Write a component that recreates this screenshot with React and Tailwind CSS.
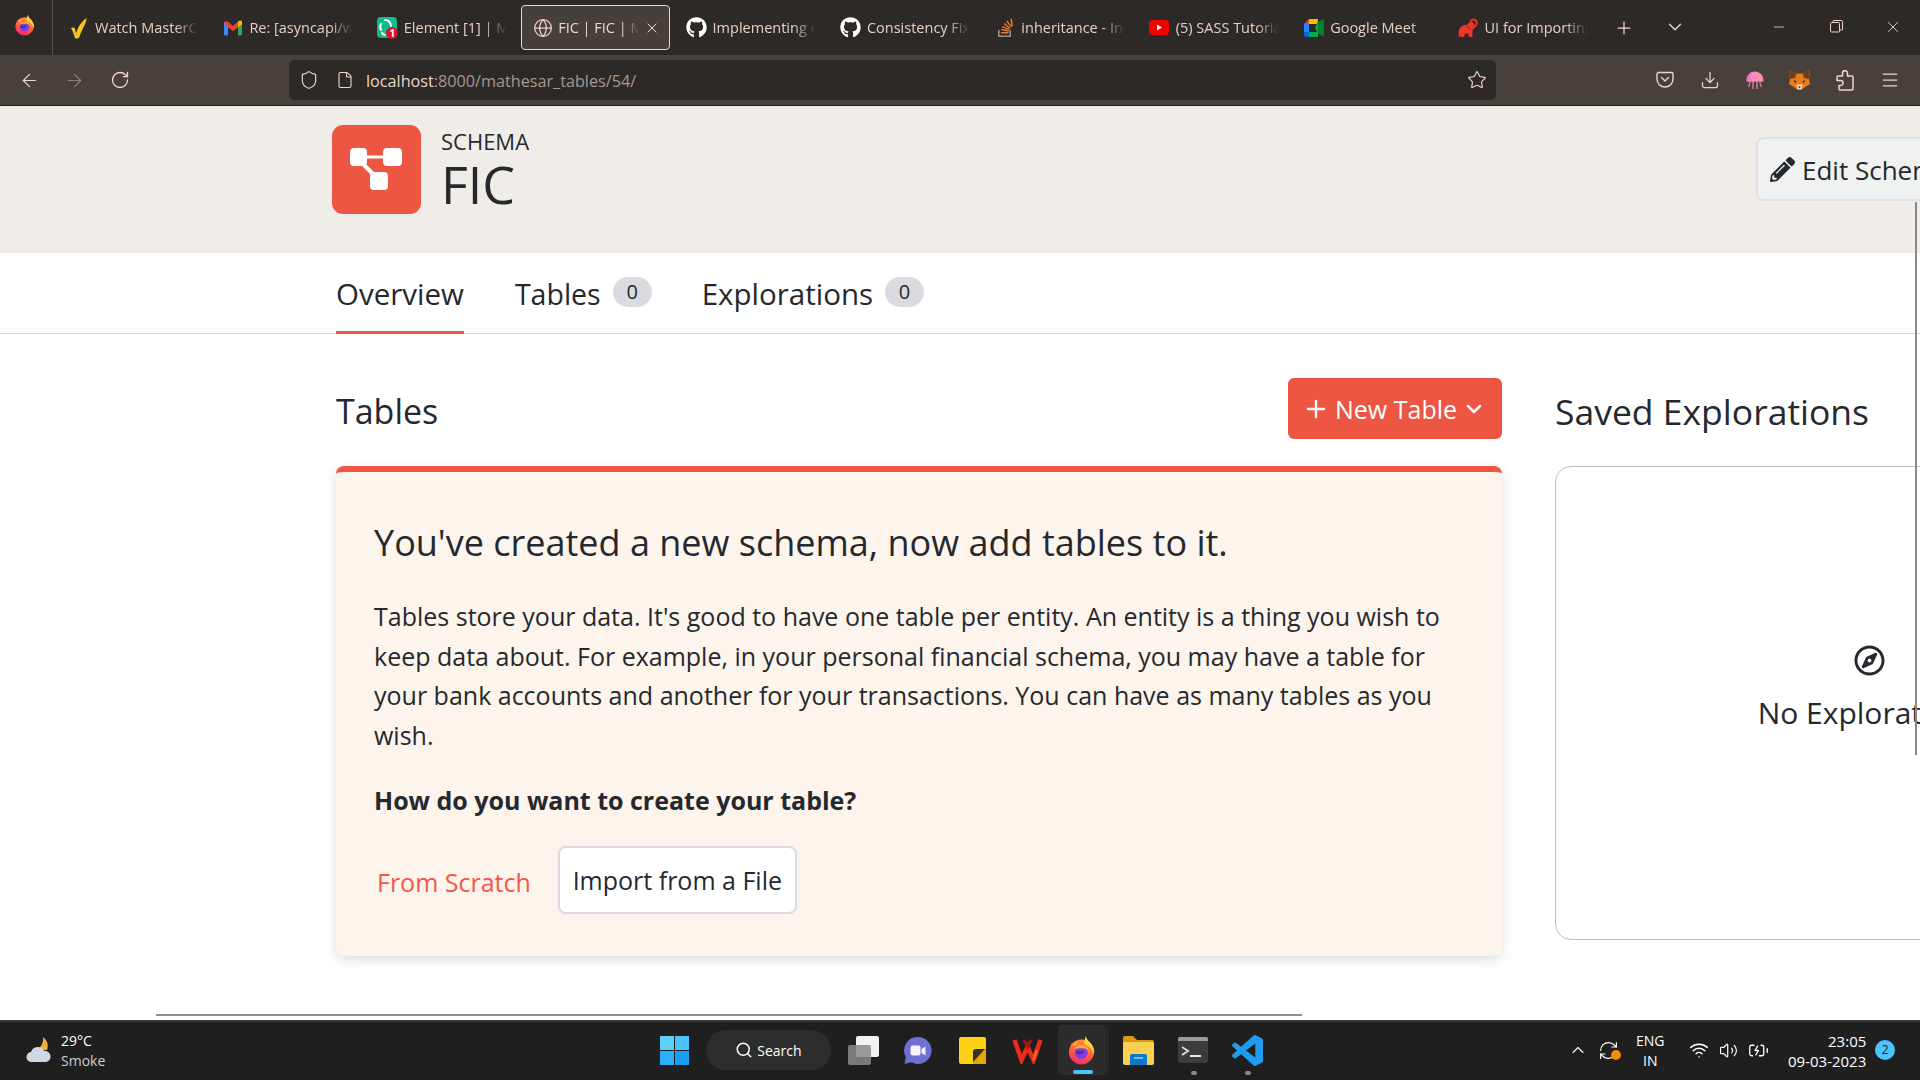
import React from "react";
import {
  ArrowLeft,
  ArrowRight,
  RotateCw,
  Shield,
  File,
  Star,
  Download,
  Menu,
  Globe,
  X,
  Plus,
  ChevronDown,
  ChevronUp,
  Minus,
  Search,
  Wifi,
  Volume2,
  BatteryCharging,
  RefreshCw,
} from "lucide-react";
import { FaGithub, FaPencilAlt, FaRegCompass } from "react-icons/fa";

function FirefoxIcon({ size }) {
  return (
    <svg width={size} height={size} viewBox="0 0 24 24">
      <defs>
        <linearGradient id="ffg" x1="0.7" y1="0" x2="0.3" y2="1">
          <stop offset="0" stopColor="#ff9a2f" />
          <stop offset="0.55" stopColor="#ff5f3f" />
          <stop offset="1" stopColor="#f0256e" />
        </linearGradient>
      </defs>
      <circle cx="11.500" cy="13.500" r="10" fill="url(#ffg)" />
      <path d="M15 0.500c.5 3 3 4.500 5 7.500 1.500 2.300 2.200 5 1.500 8-.8-4-3.500-7-7-8.500C13 6.500 14.500 3 15 0.500z" fill="#ffcf3a" />
      <path d="M3 6c.5 1 1 1.500 2 2 1-1.500 2.500-2.500 4-3-1 1-1.500 2-1.500 3C5 9 3.500 8 3 6z" fill="#ffb52f" />
      <circle cx="11.500" cy="14" r="5.200" fill="#7b3fe0" />
      <path d="M7 12c2 1.500 5 1.500 7 0-.5 2.500-2.500 4-5 3.500-1.200-.3-2-1.500-2-3.500z" fill="#4a2bb0" />
      <path d="M5.500 11.500c2-3 6-4.500 9.500-2.500 1.800 1 3 3 2.800 5-1-2.300-3-3.500-6-3.500-2.500 0-4.500.3-6.300 1z" fill="#ffa63a" />
    </svg>
  );
}

function CheckIcon() {
  return (
    <svg width="18" height="22" viewBox="0 0 18 22">
      <path d="M1 11c1.500-.8 3-.8 4 .5.400 2 .6 3.500 1 5C8 10 11 5 16.500 1c.6 4-5 12-7.500 20-1.500.6-3 .6-4 .2C4 17.500 2.500 14 1 11z" fill="#f7c326" />
    </svg>
  );
}

function GmailIcon() {
  return (
    <svg width="18" height="16" viewBox="0 0 18 16">
      <path d="M0 1.500 4 1.500 9 6l5-4.500h4v3L9 11 0 4.500z" fill="#ea4335" />
      <path d="M0 3v11.500a1 1 0 0 0 1 1h3V6z" fill="#4285f4" />
      <path d="M14 6v9.500h3a1 1 0 0 0 1-1V3z" fill="#34a853" />
      <path d="M14 1.500l2-1c1 0 2 .5 2 1.500v2.500L14 7z" fill="#fbbc05" />
    </svg>
  );
}

function ElementIcon() {
  return (
    <div className="relative w-[20px] h-[21px] rounded-[4px] bg-[#0dbd8b] shrink-0">
      <svg width="20" height="21" viewBox="0 0 20 21" fill="none" stroke="#fff" strokeWidth="2" strokeLinecap="round">
        <path d="M8 3a6 6 0 0 1 6 6" />
        <path d="M4 13a6 6 0 0 1 0-6" />
        <path d="M8 18a6 6 0 0 1-3-2" />
      </svg>
      <div className="absolute right-[-1px] bottom-[-1px] w-[12px] h-[12px] rounded-full bg-[#e0102a] text-white text-[10px] font-bold leading-[12px] text-center">
        1
      </div>
    </div>
  );
}

function StackIcon() {
  return (
    <svg width="16" height="20" viewBox="0 0 16 20">
      <path d="M1 12v7h13v-7h-1.600v5.400H2.600V12z" fill="#9a9086" />
      <path d="M4 15.500h7.500V14H4zM4.200 12.300l7.300 1.500.3-1.500-7.300-1.500zM5 9.200l6.800 3.100.6-1.300-6.800-3.100zM6.900 6.200l5.700 4.800.9-1.100-5.700-4.800zM10.500 2.500l-1.200.9 4.400 5.900 1.200-.9zM14.800 0.800l-1.500.3 1.300 7.300 1.400-.3z" fill="#e8792b" />
    </svg>
  );
}

function YoutubeIcon() {
  return (
    <svg width="20" height="15" viewBox="0 0 20 15">
      <rect width="20" height="15" rx="4" fill="#f40000" />
      <path d="M8 4.500v6l5-3z" fill="#fff" />
    </svg>
  );
}

function MeetIcon() {
  return (
    <svg width="20" height="18" viewBox="0 0 20 18">
      <path d="M5 0h9v5H5z" fill="#fbbc04" />
      <path d="M5 0v5H0z" fill="#ea4335" />
      <path d="M0 5h5v8H0z" fill="#2684fc" />
      <path d="M0 13h5v5H2a2 2 0 0 1-2-2z" fill="#0066da" />
      <path d="M5 13h9v5H5z" fill="#00ac47" />
      <path d="M14 3 20 0v18l-6-4z" fill="#00832d" />
      <path d="M14 1.500V14L11 9z" fill="#00ac47" />
    </svg>
  );
}

function ElephantIcon() {
  return (
    <svg width="21" height="20" viewBox="0 0 21 20">
      <path d="M1 19c-1-5 0-9 3-11 2-1.300 4-1 6-1.500C10.500 4 12.500 3 14.500 4c1.500.8 2 2.500 2 4.500 0 1.500-.8 3-2 3.500v7h-3.500l-.5-3.500H7L6 19H3.500L3 16.500 2.500 19z" fill="#f0352a" />
      <path d="M15.500 9c2.500-.5 3.500-3 3-5.500C18 1.500 15.500 1 13 2.500" fill="none" stroke="#f0352a" strokeWidth="2" strokeLinecap="round" />
      <path d="M10 8c-.5 2 .5 3.500 2.500 3.500" fill="none" stroke="#b3170f" strokeWidth="1" />
    </svg>
  );
}

const tabs = [
  { icon: <CheckIcon />, title: "Watch MasterClass" },
  { icon: <GmailIcon />, title: "Re: [asyncapi/website]" },
  { icon: <ElementIcon />, title: "Element [1] | Mathesar" },
  { icon: <Globe size={20} strokeWidth={1.5} className="text-[#f0d5c8]" />, title: "FIC | FIC | Mathesar", active: true },
  { icon: <FaGithub size={21} className="text-white" />, title: "Implementing consistency" },
  { icon: <FaGithub size={21} className="text-white" />, title: "Consistency Fixes for" },
  { icon: <StackIcon />, title: "inheritance - Inconsistent" },
  { icon: <YoutubeIcon />, title: "(5) SASS Tutorial for" },
  { icon: <MeetIcon />, title: "Google Meet" },
  { icon: <ElephantIcon />, title: "UI for Importing Data" },
];

function TabBar() {
  return (
    <div className="h-[55px] bg-[#2d2926] flex items-center shrink-0">
      <div className="w-[53px] h-[55px] border-r border-[#5a504a] flex items-center justify-center pb-[6px] pr-[3px]">
        <FirefoxIcon size={22} />
      </div>
      <div className="flex gap-[6px] ml-[5px]">
        {tabs.map((tab) => (
          <div
            key={tab.title}
            className={
              tab.active
                ? "w-[148.400px] h-[45px] flex items-center gap-[5px] pl-[10px] pr-[9px] rounded-[4px] border border-[#f0d5c8] bg-[#463f3a] text-[#f0d5c8]"
                : "w-[148.400px] h-[45px] flex items-center gap-[6px] pl-[10px] pr-[8px] text-[#e6cfc3]"
            }
          >
            <div className="w-[21px] flex justify-center shrink-0">{tab.icon}</div>
            <div className="flex-1 min-w-0 overflow-hidden whitespace-nowrap text-[14.500px] leading-[20px] mt-[1px] [mask-image:linear-gradient(to_right,black_78%,transparent)]">
              {tab.title}
            </div>
            {tab.active && <X size={16} strokeWidth={1.5} className="shrink-0" />}
          </div>
        ))}
      </div>
      <Plus size={20} strokeWidth={1.5} className="ml-[18px] text-[#f0d5c8]" />
      <ChevronDown size={22} strokeWidth={1.5} className="ml-[30px] text-[#f0d5c8] mb-[2px]" />
      <Minus size={16} strokeWidth={1.2} className="ml-[85px] text-[#f0d5c8] mb-[2px]" />
      <svg width="13" height="13" viewBox="0 0 13 13" fill="none" stroke="#f0d5c8" strokeWidth="1" className="ml-[43px] mb-[2px]">
        <rect x="0.500" y="2.500" width="9" height="9.500" rx="1" />
        <path d="M3 2.500V1.500a1 1 0 0 1 1-1h7.500a1 1 0 0 1 1 1V9a1 1 0 0 1-1 1h-2" />
      </svg>
      <X size={18} strokeWidth={1.2} className="ml-[41px] text-[#f0d5c8] mb-[2px]" />
    </div>
  );
}

function PocketIcon() {
  return (
    <svg width="18" height="18" viewBox="0 0 18 18" fill="none" stroke="#f0d5c8" strokeWidth="1.400" strokeLinecap="round" strokeLinejoin="round">
      <path d="M2.500 1.500h13a1.500 1.500 0 0 1 1.500 1.500v5a8 8 0 0 1-16 0V3a1.500 1.500 0 0 1 1.500-1.500z" />
      <path d="M5.500 6.500 9 10l3.500-3.500" />
    </svg>
  );
}

function JellyIcon() {
  return (
    <svg width="18" height="19" viewBox="0 0 18 19">
      <path d="M0.500 10C0.500 4 4.500 0.500 9 0.500S17.500 4 17.500 10c0 1-1 1-1.500.5-1 .6-2 .6-3 0-1.200.6-2.800.6-4 0-1.200.6-2.800.6-4 0-1 .6-2 .6-3 0-.5.5-1.500.5-1.500-.5z" fill="#f98cb4" />
      <path d="M0.800 9C1 4.500 4 1 7 .8 5 3 4 6 4 10z" fill="#e96fe0" />
      <path d="M4 11c0 3-1 4-1.500 5M7 11v7M11 11v7M14 11c0 3 1 4 1.500 5" fill="none" stroke="#f98cb4" strokeWidth="1.100" />
    </svg>
  );
}

function FoxIcon() {
  return (
    <svg width="21" height="20" viewBox="0 0 21 20">
      <path d="M0 0 7.500 3.500h6L21 0l-1 9 1 5-5.500 3.500L12.500 20h-4l-3-2.500L0 14l1-5z" fill="#ea7a1c" />
      <path d="M0 0 7.500 3.500 6 8 1.200 9zM21 0l-7.500 3.500L15 8l4.800 1z" fill="#6f3d1a" />
      <path d="M7.500 14.500h6L12.500 19h-4z" fill="#efe3d6" />
      <path d="M9 16.500h3l-1.500 2z" fill="#2f2f2f" />
      <path d="M4.500 10l3 1.200-1 2zM16.500 10l-3 1.200 1 2z" fill="#2f2f2f" />
    </svg>
  );
}

function PuzzleIcon() {
  return (
    <svg width="20" height="21" viewBox="0 0 20 21" fill="none" stroke="#f0d5c8" strokeWidth="1.500" strokeLinejoin="round">
      <path d="M8.500 3.200a2.500 2.500 0 0 1 5 0V6H18a1 1 0 0 1 1 1v12a1 1 0 0 1-1 1H6a1 1 0 0 1-1-1v-3.500h1.500a2.500 2.500 0 0 0 0-5H3V7a1 1 0 0 1 1-1h4.500z" />
    </svg>
  );
}

function Toolbar() {
  return (
    <div className="h-[51px] bg-[#48403b] border-b border-[#26221f] flex items-center shrink-0 text-[#f0d5c8]">
      <ArrowLeft size={21} strokeWidth={1.4} className="ml-[19px]" />
      <ArrowRight size={21} strokeWidth={1.4} className="ml-[24px] text-[#8f7f76]" />
      <RotateCw size={20} strokeWidth={1.6} className="ml-[25px]" />
      <div className="ml-[159px] w-[1207px] h-[40px] rounded-[5px] bg-[#2d2926] flex items-center pl-[10px]">
        <Shield size={20} strokeWidth={1.4} />
        <File size={18} strokeWidth={1.5} className="ml-[17px]" />
        <div className="ml-[12px] mt-[2px] text-[16.200px] text-[#f0d5c8]">
          localhost<span className="text-[#a8988e]">:8000/mathesar_tables/54/</span>
        </div>
        <Star size={20} strokeWidth={1.4} className="ml-auto mr-[9px]" />
      </div>
      <div className="ml-[160px]">
        <PocketIcon />
      </div>
      <Download size={20} strokeWidth={1.5} className="ml-[26px]" />
      <div className="ml-[26px]">
        <JellyIcon />
      </div>
      <div className="ml-[25px]">
        <FoxIcon />
      </div>
      <div className="ml-[24px]">
        <PuzzleIcon />
      </div>
      <Menu size={20} strokeWidth={1.5} className="ml-[26px]" />
    </div>
  );
}

function SchemaLogo() {
  return (
    <svg width="89" height="89" viewBox="0 0 89 89" className="shrink-0">
      <rect width="89" height="89" rx="11" fill="#ee5644" />
      <g fill="#fff">
        <rect x="18" y="23" width="17" height="18" rx="4" />
        <rect x="51" y="23" width="19" height="18" rx="4" />
        <rect x="38" y="47" width="18" height="18" rx="4" />
      </g>
      <path d="M30 32h25" stroke="#fff" strokeWidth="3" />
      <path d="M28 36 47 55" stroke="#fff" strokeWidth="4" />
    </svg>
  );
}

function Page() {
  return (
    <div className="flex-1 min-h-0 overflow-hidden bg-white text-[#25292e]">
      <div className="w-[2240px]">
        <div className="h-[147px] bg-[#f0ede9] flex items-start pl-[332px] pt-[19px]">
          <SchemaLogo />
          <div className="ml-[20px] w-[120px] shrink-0">
            <div className="text-[22px] leading-[30px] mt-[1px]">SCHEMA</div>
            <div className="text-[52px] leading-[62px] mt-[-3px]">FIC</div>
          </div>
          <div className="ml-[1195px] mt-[12px] h-[64px] w-[300px] shrink-0 rounded-[8px] border-2 border-[#dfe1e4] bg-[#f0f1f1] flex items-center pl-[12px] text-[26px]">
            <FaPencilAlt size={25} />
            <span className="ml-[7px] mt-[3px]">Edit Schema</span>
          </div>
        </div>

        <div className="h-[81px] border-b border-[#d6d7da] flex items-start pl-[336px] text-[29.500px]">
          <div className="h-[81px] pt-[20px] leading-[42px] border-b-[3px] border-[#ee5644]">Overview</div>
          <div className="ml-[51px] pt-[20px] leading-[42px] text-[28.500px]">Tables</div>
          <div className="ml-[12px] mt-[24px] w-[39px] h-[30px] rounded-full bg-[#d9dbe0] text-[20px] leading-[30px] text-center">0</div>
          <div className="ml-[50px] pt-[20px] leading-[42px]">Explorations</div>
          <div className="ml-[12px] mt-[24px] w-[39px] h-[30px] rounded-full bg-[#d9dbe0] text-[20px] leading-[30px] text-center">0</div>
        </div>

        <div className="flex pl-[336px] gap-[53px] pt-[44px]">
          <div className="w-[1166px] shrink-0">
            <div className="h-[61px] flex items-center justify-between">
              <h2 className="text-[34px] leading-[50px] mt-[5px]">Tables</h2>
              <div className="h-[61px] w-[214px] rounded-[6px] bg-[#ee5644] text-white flex items-center pl-[14px] text-[25px]">
                <Plus size={28} strokeWidth={2} />
                <span className="ml-[5px] mt-[3px]">New Table</span>
                <ChevronDown size={24} strokeWidth={2.5} className="ml-[5px]" />
              </div>
            </div>
            <div className="mt-[27px] h-[490px] rounded-[8px] border-t-[6px] border-[#ee5644] bg-[#fdf4ec] shadow-[0_4px_12px_rgba(0,0,0,0.13)] pl-[38px] pt-[46px]">
              <h3 className="text-[36px] leading-[50px]">You've created a new schema, now add tables to it.</h3>
              <p className="text-[25px] leading-[39.600px] mt-[29px]">
                Tables store your data. It's good to have one table per entity. An entity is a thing you wish to
                <br />
                keep data about. For example, in your personal financial schema, you may have a table for
                <br />
                your bank accounts and another for your transactions. You can have as many tables as you
                <br />
                wish.
              </p>
              <div className="text-[25px] leading-[40px] font-bold mt-[25px]">How do you want to create your table?</div>
              <div className="flex items-center mt-[26px]">
                <div className="ml-[3px] mt-[4px] text-[25px] text-[#f2584a]">From Scratch</div>
                <div className="ml-[27px] w-[239px] h-[68px] rounded-[8px] border-2 border-[#d9dbe0] bg-white flex items-center justify-center text-[25px]">
                  Import from a File
                </div>
              </div>
            </div>
          </div>

          <div className="w-[628px] shrink-0">
            <div className="h-[61px] flex items-center">
              <h2 className="text-[35.500px] leading-[50px] mt-[4px]">Saved Explorations</h2>
            </div>
            <div className="mt-[27px] h-[474px] rounded-[16px] border-[1.500px] border-[#bcbfc5] flex flex-col items-center pt-[178px]">
              <FaRegCompass size={31} />
              <div className="text-[30px] leading-[44px] mt-[15px]">No Explorations</div>
            </div>
          </div>
        </div>
      </div>
    </div>
  );
}

function WeatherIcon() {
  return (
    <svg width="28" height="28" viewBox="0 0 28 28">
      <path d="M18 1c4 3 6 8 4 13l-12 1c5-2 9-8 8-14z" fill="#f2b035" />
      <path d="M7 26a5 5 0 0 1-1-10 7 7 0 0 1 13-1 5.500 5.500 0 0 1 2 11z" fill="#cfd8e3" />
    </svg>
  );
}

function WindowsIcon() {
  return (
    <div className="grid grid-cols-2 gap-[1px] w-[29px] h-[29px] shrink-0">
      <div className="bg-[#5ed0fa]" />
      <div className="bg-[#4cc2ff]" />
      <div className="bg-[#2ab0fb]" />
      <div className="bg-[#1a9df8]" />
    </div>
  );
}

function TaskViewIcon() {
  return (
    <div className="relative w-[31px] h-[29px] shrink-0">
      <div className="absolute right-0 top-0 w-[23px] h-[21px] rounded-[2px] bg-[#f2f2f2]" />
      <div className="absolute left-0 bottom-0 w-[23px] h-[20px] rounded-[2px] bg-[#8a8a8a]/85" />
    </div>
  );
}

function ChatIcon() {
  return (
    <svg width="29" height="29" viewBox="0 0 29 29">
      <path d="M15 1a13.500 13.500 0 1 1-6.500 25.300L1.500 28 2.800 21A13.500 13.500 0 0 1 15 1z" fill="#6d6fd3" />
      <rect x="7.500" y="9.500" width="10" height="10" rx="2" fill="#f4f4ff" />
      <path d="M18.500 13l4-2.500v9l-4-2.500z" fill="#f4f4ff" />
    </svg>
  );
}

function StickyIcon() {
  return (
    <svg width="27" height="27" viewBox="0 0 27 27">
      <path d="M2 0h23a2 2 0 0 1 2 2v14L16 27H2a2 2 0 0 1-2-2V2a2 2 0 0 1 2-2z" fill="#fcd116" />
      <path d="M27 12v15H14V16a4 4 0 0 1 4-4z" fill="#e5a800" />
      <path d="M26 12 14 25V15a3 3 0 0 1 3-3z" fill="#33322c" />
    </svg>
  );
}

function WpsIcon() {
  return (
    <svg width="31" height="27" viewBox="0 0 31 27" fill="none">
      <path d="M2.500 3 9.500 23l6-13 6 13L28.500 3" stroke="#ee2a1c" strokeWidth="4.500" />
      <path d="M12 3l3.500 7 3.500-7" stroke="#a8150d" strokeWidth="3" />
      <path d="M21.500 23 25 13" stroke="#ff5a1f" strokeWidth="3" />
    </svg>
  );
}

function FolderIcon() {
  return (
    <svg width="31" height="29" viewBox="0 0 31 29">
      <path d="M0 2a2 2 0 0 1 2-2h8l4 4h15a2 2 0 0 1 2 2v4H0z" fill="#d99a12" />
      <path d="M0 6h29a2 2 0 0 1 2 2v19a2 2 0 0 1-2 2H2a2 2 0 0 1-2-2z" fill="#fcd053" />
      <path d="M9 18h13a2 2 0 0 1 2 2v9H7v-9a2 2 0 0 1 2-2z" fill="#0f78c8" />
      <path d="M11 22h9" stroke="#8fd0ff" strokeWidth="1.500" />
    </svg>
  );
}

function TerminalIcon() {
  return (
    <svg width="30" height="26" viewBox="0 0 30 26">
      <rect width="30" height="26" rx="2" fill="#3c3c3c" />
      <path d="M0 2a2 2 0 0 1 2-2h26a2 2 0 0 1 2 2v2H0z" fill="#9a9a9a" />
      <path d="M4 10l6 4-6 4" fill="none" stroke="#d8d8d8" strokeWidth="2" />
      <path d="M12 19h11" stroke="#e8e8e8" strokeWidth="2" />
    </svg>
  );
}

function VscodeIcon() {
  return (
    <svg width="31" height="31" viewBox="0 0 24 24">
      <path d="M23.150 2.587 18.210.21a1.494 1.494 0 0 0-1.705.29l-9.460 8.630-4.120-3.128a.999.999 0 0 0-1.276.057L.327 7.261A1 1 0 0 0 .326 8.740L3.899 12 .326 15.260a1 1 0 0 0 .001 1.479L1.650 17.940a.999.999 0 0 0 1.276.057l4.120-3.128 9.460 8.630a1.492 1.492 0 0 0 1.704.29l4.942-2.377A1.500 1.500 0 0 0 24 20.060V3.939a1.500 1.500 0 0 0-.850-1.352zm-5.146 14.861L10.826 12l7.178-5.448v10.896z" fill="#1f9cf0" />
    </svg>
  );
}

function Taskbar() {
  return (
    <div className="h-[60px] bg-[#1f1f1f] border-t-2 border-[#3a3a3a] pb-[2px] flex items-center shrink-0 text-white relative">
      <div className="ml-[25px]">
        <WeatherIcon />
      </div>
      <div className="ml-[8px] mt-[2px] text-[14px] leading-[20px]">
        <div>29°C</div>
        <div className="text-[#d0d0d0]">Smoke</div>
      </div>
      <div className="ml-[555px]">
        <WindowsIcon />
      </div>
      <div className="ml-[17px] w-[125px] h-[40px] rounded-full bg-[#2d2d2d] flex items-center pl-[29px] text-[14px]">
        <Search size={18} strokeWidth={2} />
        <span className="ml-[4px]">Search</span>
      </div>
      <div className="ml-[17px]">
        <TaskViewIcon />
      </div>
      <div className="ml-[24px]">
        <ChatIcon />
      </div>
      <div className="ml-[27px]">
        <StickyIcon />
      </div>
      <div className="ml-[26px]">
        <WpsIcon />
      </div>
      <div className="ml-[15px] w-[47px] h-[50px] rounded-[4px] bg-[#2c2c2c] flex items-center justify-center relative shadow-[4px_0_0_#262626]">
        <FirefoxIcon size={30} />
        <div className="absolute bottom-[1px] left-[15px] w-[20px] h-[4px] rounded-full bg-[#4cc2ff]" />
      </div>
      <div className="ml-[18px]">
        <FolderIcon />
      </div>
      <div className="ml-[24px] relative">
        <TerminalIcon />
        <div className="absolute bottom-[-12px] left-[13px] w-[6px] h-[4px] rounded-full bg-[#8a8a8a]" />
      </div>
      <div className="ml-[24px] relative">
        <VscodeIcon />
        <div className="absolute bottom-[-9px] left-[13px] w-[6px] h-[4px] rounded-full bg-[#8a8a8a]" />
      </div>
      <ChevronUp size={20} strokeWidth={1.3} className="ml-[305px]" />
      <div className="ml-[10px] relative">
        <RefreshCw size={21} strokeWidth={1.3} />
        <div className="absolute right-[-2px] bottom-[1px] w-[10px] h-[10px] rounded-full bg-[#f58a07]" />
      </div>
      <div className="ml-[14px] mt-[2px] w-[34px] text-center text-[14px] leading-[20px]">
        <div>ENG</div>
        <div>IN</div>
      </div>
      <Wifi size={20} strokeWidth={1.8} className="ml-[22px]" />
      <Volume2 size={19} strokeWidth={1.5} className="ml-[10px]" />
      <BatteryCharging size={21} strokeWidth={1.5} className="ml-[10px]" />
      <div className="ml-[15px] mt-[1px] w-[82px] text-right text-[15px] leading-[20px]">
        <div>23:05</div>
        <div>09-03-2023</div>
      </div>
      <div className="ml-[9px] w-[20px] h-[20px] rounded-full bg-[#4cc2ff] text-[#1f1f1f] text-[12px] leading-[20px] text-center">2</div>
    </div>
  );
}

export default function App() {
  return (
    <div className="relative w-[1920px] h-[1080px] overflow-hidden flex flex-col font-['Open_Sans',sans-serif]">
      <TabBar />
      <Toolbar />
      <Page />
      <Taskbar />
      {/* overlay scrollbars */}
      <div className="absolute left-[1915px] top-[202px] w-[2px] h-[553px] bg-[#8a8a8a]" />
      <div className="absolute left-[156px] top-[1014px] w-[1146px] h-[2px] bg-[#8e8e8e]" />
    </div>
  );
}
